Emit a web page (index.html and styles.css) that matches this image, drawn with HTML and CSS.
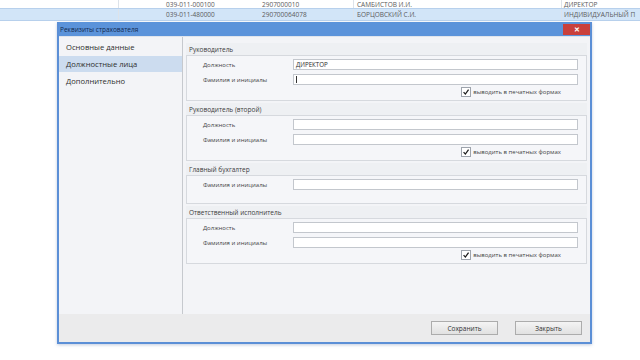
FILE: index.html
```html
<!DOCTYPE html>
<html lang="ru">
<head>
    <meta charset="UTF-8">
    <title>Реквизиты страхователя</title>
    <link rel="stylesheet" href="styles.css">
</head>
<body>
    <div class="grid">
        <div class="grid-row">
            <div class="cell c1"></div>
            <div class="cell c2">039-011-000100</div>
            <div class="cell c3">2907000010</div>
            <div class="cell c4">САМБИСТОВ И.И.</div>
            <div class="cell c5">ДИРЕКТОР</div>
        </div>
        <div class="grid-row selected">
            <div class="cell c1"></div>
            <div class="cell c2">039-011-480000</div>
            <div class="cell c3">290700064078</div>
            <div class="cell c4">БОРЦОВСКИЙ С.И.</div>
            <div class="cell c5">ИНДИВИДУАЛЬНЫЙ П</div>
        </div>
    </div>

    <div class="dialog">
        <div class="titlebar">
            <span class="title">Реквизиты страхователя</span>
            <span class="close">&#x2715;</span>
        </div>
        <div class="dialog-body">
            <div class="nav">
                <div class="nav-item">Основные данные</div>
                <div class="nav-item active">Должностные лица</div>
                <div class="nav-item">Дополнительно</div>
            </div>
            <div class="panel">
                <div class="group">
                    <div class="group-head">Руководитель</div>
                    <div class="group-box">
                        <div class="field"><span class="label">Должность</span><div class="input">ДИРЕКТОР</div></div>
                        <div class="field"><span class="label">Фамилия и инициалы</span><div class="input"><span class="caret"></span></div></div>
                        <div class="check-row"><span class="check"><svg viewBox="0 0 10 10"><path d="M2 5.2 L4.2 7.6 L8.2 2" /></svg></span>выводить в печатных формах</div>
                    </div>
                </div>
                <div class="group">
                    <div class="group-head">Руководитель (второй)</div>
                    <div class="group-box">
                        <div class="field"><span class="label">Должность</span><div class="input"></div></div>
                        <div class="field"><span class="label">Фамилия и инициалы</span><div class="input"></div></div>
                        <div class="check-row"><span class="check"><svg viewBox="0 0 10 10"><path d="M2 5.2 L4.2 7.6 L8.2 2" /></svg></span>выводить в печатных формах</div>
                    </div>
                </div>
                <div class="group">
                    <div class="group-head">Главный бухгалтер</div>
                    <div class="group-box short">
                        <div class="field"><span class="label">Фамилия и инициалы</span><div class="input"></div></div>
                    </div>
                </div>
                <div class="group">
                    <div class="group-head">Ответственный исполнитель</div>
                    <div class="group-box">
                        <div class="field"><span class="label">Должность</span><div class="input"></div></div>
                        <div class="field"><span class="label">Фамилия и инициалы</span><div class="input"></div></div>
                        <div class="check-row"><span class="check"><svg viewBox="0 0 10 10"><path d="M2 5.2 L4.2 7.6 L8.2 2" /></svg></span>выводить в печатных формах</div>
                    </div>
                </div>
            </div>
        </div>
        <div class="footer">
            <button class="btn">Сохранить</button>
            <button class="btn">Закрыть</button>
        </div>
    </div>
</body>
</html>
```

FILE: styles.css
```css
body {
    margin: 0;
    padding: 0;
    background-color: #ffffff;
    font-family: "Open Sans", "Liberation Sans", sans-serif;
    color: #3a3a3a;
    height: 360px;
    overflow: hidden;
}
.grid {
    display: flex;
    flex-direction: column;
    font-size: 6.5px;
    color: #5a5a5a;
}
.grid-row {
    display: flex;
    height: 8px;
    align-items: center;
}
.grid-row.selected {
    height: 11px;
    background-color: #d2e5f8;
    border-top: 1px solid #b7d0ec;
    border-bottom: 1px solid #b7d0ec;
}
.cell {
    height: 100%;
    display: flex;
    align-items: center;
    box-sizing: border-box;
    white-space: nowrap;
    overflow: hidden;
}
.c1 { width: 118px; }
.c2 { width: 142px; padding-left: 47px; border-left: 1px solid #dde3ea; }
.c3 { width: 93px; padding-left: 2px; }
.c4 { width: 208px; padding-left: 3px; border-left: 1px solid #dde3ea; }
.c5 { flex: 1; padding-left: 2px; border-left: 1px solid #dde3ea; }

.dialog {
    margin-left: 57px;
    margin-top: 1px;
    width: 535px;
    height: 322px;
    box-sizing: border-box;
    border: 2px solid #5b8fd6;
    border-top: none;
    background-color: #f3f4f7;
    display: flex;
    flex-direction: column;
    box-shadow: 0 1px 3px rgba(80, 110, 160, 0.35);
}
.titlebar {
    height: 14px;
    background-color: #5b93da;
    display: flex;
    align-items: center;
    justify-content: space-between;
}
.title {
    font-size: 6.5px;
    color: #13294f;
    padding-left: 1px;
}
.close {
    width: 27px;
    height: 11px;
    margin-top: 1px;
    background-color: #c9403c;
    color: #ffffff;
    font-size: 7px;
    font-weight: bold;
    display: flex;
    align-items: center;
    justify-content: center;
}
.dialog-body {
    flex: 1;
    display: flex;
    border-top: 1px solid #dfe4ec;
    background-color: #f3f4f7;
}
.nav {
    width: 123px;
    border-right: 1px solid #c6c9ce;
    padding-top: 2px;
    display: flex;
    flex-direction: column;
    gap: 1px;
}
.nav-item {
    height: 16px;
    display: flex;
    align-items: center;
    padding-left: 7px;
    margin-right: 2px;
    font-size: 7.6px;
    color: #2e2e2e;
}
.nav-item.active {
    background-color: #ccdcef;
    margin-right: 0;
}
.panel {
    flex: 1;
    padding: 6px 3px 0 3px;
    display: flex;
    flex-direction: column;
    gap: 2px;
}
.group-head {
    height: 12px;
    display: flex;
    align-items: center;
    padding-left: 3px;
    font-size: 6.5px;
    color: #3c3c3c;
    background-color: #eef0f3;
}
.group-box {
    border: 1px solid #d6d9de;
    background-color: #f5f6f9;
    padding: 3px 8px 3px 16px;
    display: flex;
    flex-direction: column;
    gap: 4px;
}
.group-box.short {
    padding-bottom: 13px;
}
.field {
    display: flex;
    align-items: center;
    height: 11px;
}
.label {
    width: 90px;
    font-size: 6px;
    color: #444444;
}
.input {
    flex: 1;
    height: 11px;
    box-sizing: border-box;
    background-color: #ffffff;
    border: 1px solid #c3c7cd;
    font-size: 6.2px;
    color: #2a2a2a;
    padding-left: 2px;
    display: flex;
    align-items: center;
}
.caret {
    width: 1px;
    height: 7px;
    background-color: #333333;
}
.check-row {
    display: flex;
    align-items: center;
    justify-content: flex-end;
    height: 10px;
    margin-top: -2px;
    padding-right: 17px;
    font-size: 6px;
    color: #444444;
}
.check {
    width: 8px;
    height: 8px;
    border: 1px solid #9ea4ac;
    background-color: #ffffff;
    margin-right: 2px;
    display: flex;
}
.check svg {
    width: 8px;
    height: 8px;
}
.check path {
    fill: none;
    stroke: #1d1d1d;
    stroke-width: 1.6;
}
.footer {
    height: 28px;
    background-color: #ebebec;
    display: flex;
    justify-content: flex-end;
    align-items: center;
    gap: 17px;
    padding-right: 8px;
}
.btn {
    width: 67px;
    height: 14px;
    padding: 0;
    font-family: "Open Sans", "Liberation Sans", sans-serif;
    font-size: 6.5px;
    color: #333333;
    background: linear-gradient(#f4f4f4, #e1e1e1);
    border: 1px solid #acacac;
}
```
